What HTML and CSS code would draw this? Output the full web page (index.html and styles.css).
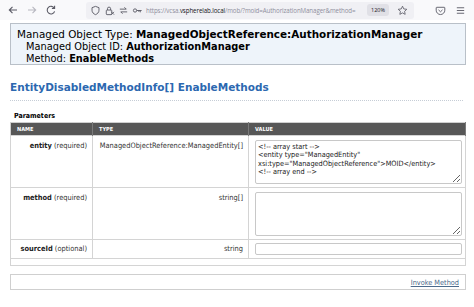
FILE: index.html
```html
<!DOCTYPE html>
<html lang="en">
<head>
    <meta charset="UTF-8">
    <title>Managed Object Browser - EnableMethods</title>
    <link rel="stylesheet" href="styles.css">
</head>
<body>
    <div class="toolbar">
        <div class="nav-btns">
            <svg width="12" height="12" viewBox="0 0 12 12"><path d="M10 6H2.5M5.5 2.8L2.3 6l3.2 3.2" fill="none" stroke="#5b5b66" stroke-width="1.1"/></svg>
            <svg width="12" height="12" viewBox="0 0 12 12"><path d="M2 6h7.5M6.5 2.8L9.7 6 6.5 9.2" fill="none" stroke="#b8b8c0" stroke-width="1.1"/></svg>
            <svg width="12" height="12" viewBox="0 0 12 12"><path d="M9.3 4.2A3.8 3.8 0 1 0 9.6 7.4M9.6 1.8v2.7H6.9" fill="none" stroke="#5b5b66" stroke-width="1.1"/></svg>
        </div>
        <div class="urlbar">
            <svg width="11" height="11" viewBox="0 0 12 12"><path d="M6 1.5l3.8 1.4v2.8c0 2.4-1.7 4-3.8 4.8-2.1-.8-3.8-2.4-3.8-4.8V2.9z" fill="none" stroke="#5b5b66" stroke-width="1"/></svg>
            <svg width="11" height="11" viewBox="0 0 12 12"><rect x="2.5" y="5.5" width="6" height="5" rx=".8" fill="none" stroke="#5b5b66"/><path d="M3.8 5.5V4a1.7 1.7 0 0 1 3.4 0v1.5" fill="none" stroke="#5b5b66"/><path d="M8 7.5l3 3M11 7.5l-3 3" stroke="#5b5b66" stroke-width=".9"/></svg>
            <svg width="11" height="11" viewBox="0 0 12 12"><path d="M2 4.5h7M7 2.5l2 2M10 7.5H3M5 9.5l-2-2" fill="none" stroke="#5b5b66" stroke-width="1"/></svg>
            <svg width="11" height="11" viewBox="0 0 12 12"><circle cx="3.3" cy="6" r="1.8" fill="none" stroke="#5b5b66"/><path d="M5.1 6h5.4M9 6v2M7.5 6v1.5" fill="none" stroke="#5b5b66"/></svg>
            <span class="url"><span class="url-dim">https://vcsa.</span>vspherelab.local<span class="url-dim">/mob/?moid=AuthorizationManager&amp;method=</span></span>
            <span class="zoom-badge">120%</span>
            <svg width="11" height="11" viewBox="0 0 12 12"><path d="M6 1.3l1.4 3 3.3.4-2.4 2.2.6 3.3L6 8.6 3.1 10.2l.6-3.3-2.4-2.2 3.3-.4z" fill="none" stroke="#5b5b66" stroke-width=".9"/></svg>
        </div>
        <div class="tool-icons">
            <svg width="11" height="11" viewBox="0 0 12 12"><path d="M2 2.5h8a.7.7 0 0 1 .7.7v2.5a4.7 4.7 0 0 1-9.4 0V3.2a.7.7 0 0 1 .7-.7z" fill="none" stroke="#5b5b66"/><path d="M3.8 5.3L6 7.4l2.2-2.1" fill="none" stroke="#5b5b66"/></svg>
            <svg width="11" height="11" viewBox="0 0 12 12"><path d="M2 3h8M2 6h8M2 9h8" stroke="#5b5b66" stroke-width="1"/></svg>
        </div>
    </div>

    <div class="page">
        <div class="object-box">
            <p class="type-line">Managed Object Type: <b>ManagedObjectReference:AuthorizationManager</b></p>
            <p class="sub-line">Managed Object ID: <b>AuthorizationManager</b></p>
            <p class="sub-line">Method: <b>EnableMethods</b></p>
        </div>

        <h1 class="method-title">EntityDisabledMethodInfo[] EnableMethods</h1>

        <p class="section-label">Parameters</p>
        <table class="params">
            <thead>
                <tr>
                    <th class="col-name">NAME</th>
                    <th class="col-type">TYPE</th>
                    <th>VALUE</th>
                </tr>
            </thead>
            <tbody>
                <tr class="tall-row">
                    <td class="name-cell"><b>entity</b> (required)</td>
                    <td class="type-cell">ManagedObjectReference:ManagedEntity[]</td>
                    <td class="value-cell"><textarea class="value-area">&lt;!-- array start --&gt;
&lt;entity type="ManagedEntity" xsi:type="ManagedObjectReference"&gt;MOID&lt;/entity&gt;
&lt;!-- array end --&gt;</textarea></td>
                </tr>
                <tr class="tall-row">
                    <td class="name-cell"><b>method</b> (required)</td>
                    <td class="type-cell">string[]</td>
                    <td class="value-cell"><textarea class="value-area"></textarea></td>
                </tr>
                <tr class="short-row">
                    <td class="name-cell"><b>sourceId</b> (optional)</td>
                    <td class="type-cell">string</td>
                    <td class="value-cell"><input type="text" class="value-input"></td>
                </tr>
                <tr class="spacer-row">
                    <td colspan="3"></td>
                </tr>
            </tbody>
        </table>

        <div class="invoke-box">
            <a href="#" class="invoke-link">Invoke Method</a>
        </div>
    </div>
</body>
</html>
```

FILE: styles.css
```css
* {
    margin: 0;
    padding: 0;
    box-sizing: border-box;
}

body {
    font-family: "DejaVu Sans", Verdana, sans-serif;
    background: #ffffff;
    color: #000;
}

/* Browser toolbar */
.toolbar {
    height: 20px;
    display: flex;
    align-items: center;
    background: #f9f9fb;
    padding: 0 6px 0 7px;
}

.nav-btns {
    display: flex;
    gap: 7px;
    align-items: center;
    width: 79px;
}

.nav-btns svg, .urlbar svg, .tool-icons svg {
    display: block;
    flex: none;
}

.urlbar {
    height: 17px;
    width: 328px;
    display: flex;
    align-items: center;
    gap: 3px;
    background: #f0f0f4;
    border-radius: 3px;
    padding: 0 6px 0 4px;
    overflow: hidden;
}

.url {
    font-family: "Open Sans", sans-serif;
    font-size: 6.2px;
    color: #15141a;
    white-space: nowrap;
    flex: 1;
    letter-spacing: -0.1px;
}

.url-dim {
    color: #8f8f9d;
}

.zoom-badge {
    font-family: "Open Sans", sans-serif;
    font-size: 5.5px;
    background: #e0e0e6;
    border-radius: 3px;
    padding: 2px 4px;
    color: #15141a;
    margin-right: 5px;
}

.tool-icons {
    display: flex;
    gap: 9px;
    margin-left: auto;
    padding-right: 2px;
}

/* Page content */
.page {
    padding: 3px 8px 0 10px;
}

.object-box {
    background: #eef4fa;
    border: 1px solid #b9c0c8;
    padding: 4px 6px;
    height: 42px;
}

.type-line {
    font-size: 10.4px;
    line-height: 13px;
}

.sub-line {
    font-size: 9.8px;
    line-height: 12px;
    padding-left: 9px;
}

.method-title {
    font-size: 10.5px;
    color: #2c68b0;
    font-weight: bold;
    margin-top: 16px;
    padding-bottom: 7px;
    border-bottom: 1px dotted #c6cdd6;
    margin-right: 3px;
}

.section-label {
    font-family: "DejaVu Sans Condensed", "DejaVu Sans", sans-serif;
    font-size: 7px;
    font-weight: bold;
    margin: 11px 0 2px 4px;
}

.params {
    width: 100%;
    border-collapse: collapse;
    border: 1px solid #cfcfcf;
    font-family: "DejaVu Sans Condensed", "DejaVu Sans", sans-serif;
    font-size: 7.4px;
}

.params th {
    background: #575757;
    color: #fff;
    font-size: 5.6px;
    font-weight: bold;
    text-align: left;
    height: 13px;
    padding: 0 6px;
    border-right: 1px solid #7a7a7a;
}

.col-name {
    width: 82px;
}

.col-type {
    width: 156px;
}

.params td {
    border: 1px solid #d4d4d4;
    padding: 5px 5px;
    vertical-align: top;
    color: #333;
}

.tall-row td {
    height: 52px;
}

.short-row td {
    height: 18px;
    padding-top: 4px;
}

.name-cell {
    text-align: right;
    color: #666;
}

.name-cell b {
    color: #222;
}

.type-cell {
    text-align: right;
}

.params .value-cell {
    padding: 4px 3px 3px 6px;
}

.value-area {
    display: block;
    width: 100%;
    height: 44px;
    border: 1px solid #c8c8c8;
    border-radius: 2px;
    font-family: "DejaVu Sans Condensed", "DejaVu Sans", sans-serif;
    font-size: 7.3px;
    line-height: 8.3px;
    padding: 2px 2px;
    color: #222;
    resize: both;
}

.params .short-row .value-cell {
    padding: 3px 3px 2px 6px;
}

.value-input {
    display: block;
    width: 100%;
    height: 12px;
    border: 1px solid #c8c8c8;
    border-radius: 2px;
}

.spacer-row td {
    height: 7px;
    padding: 0;
}

.invoke-box {
    margin-top: 8px;
    border: 1px solid #cfcfcf;
    height: 16px;
    display: flex;
    align-items: center;
    justify-content: flex-end;
    padding-right: 6px;
}

.invoke-link {
    font-family: "DejaVu Sans Condensed", "DejaVu Sans", sans-serif;
    font-size: 7.3px;
    color: #4b6a8c;
}
```
